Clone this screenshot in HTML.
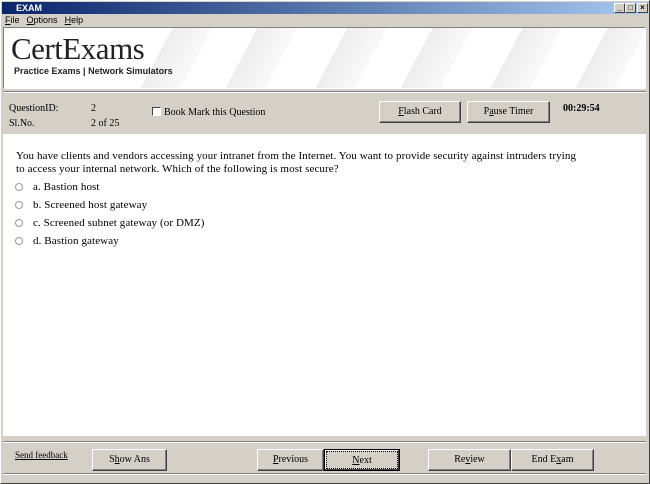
<!DOCTYPE html>
<html><head><meta charset="utf-8"><style>
*{margin:0;padding:0;box-sizing:border-box}
body{width:650px;height:484px;background:#d4d0c8;position:relative;overflow:hidden;font-family:"Liberation Serif",serif;font-size:10px;color:#000}
.abs{position:absolute}
.win{left:0;top:0;width:650px;height:484px;border:1px solid #fff;border-right-color:#404040;border-bottom-color:#404040}
.title{left:2px;top:2px;width:646px;height:12px;background:linear-gradient(90deg,#0a246a,#a6caf0);color:#fff;font:bold 9px "Liberation Sans",sans-serif;padding-left:14px;line-height:12px}
.tb{top:3px;width:11px;height:10px;background:#d4d0c8;border:1px solid #fff;border-right-color:#404040;border-bottom-color:#404040;font:bold 8px "Liberation Sans",sans-serif;text-align:center;line-height:8px;color:#000}
.menu{left:5px;top:15px;font:9px "Liberation Sans",sans-serif}
.menu span{margin-right:7px}
.banner{left:3px;top:27px;width:643px;height:62px;background:#fff;border:1px solid #808080;border-right-color:#fff;border-bottom-color:#fff;overflow:hidden}
.stripe{position:absolute;top:0;width:40px;height:70px;transform:skewX(-28deg);background:linear-gradient(90deg,rgba(215,215,215,.45),rgba(240,240,240,.35));}
.btn{position:absolute;background:#d4d0c8;border:1px solid #fff;border-right-color:#404040;border-bottom-color:#404040;box-shadow:inset -1px -1px #808080;text-align:center;font-size:10px}
.content{left:3px;top:134px;width:643px;height:302px;background:#fff;font-size:11px;letter-spacing:0.1px}
.opt{position:absolute;left:12px}
.opt i{display:inline-block;width:8px;height:8px;border-radius:50%;border:1px solid #999;margin-right:10px;vertical-align:-1px}
.hl{position:absolute;left:3px;width:643px;height:2px;border-top:1px solid #808080;border-bottom:1px solid #fff}
</style></head><body>
<div class="abs win"></div>
<div class="abs title">EXAM</div>
<div class="abs tb" style="left:614px">_</div>
<div class="abs tb" style="left:625px">□</div>
<div class="abs tb" style="left:637px">×</div>
<div class="abs menu"><span><u>F</u>ile</span><span><u>O</u>ptions</span><span><u>H</u>elp</span></div>
<div class="abs banner">
<div class="stripe" style="left:150px"></div><div class="stripe" style="left:235px"></div><div class="stripe" style="left:325px"></div><div class="stripe" style="left:410px"></div><div class="stripe" style="left:500px"></div><div class="stripe" style="left:585px"></div>
<div style="position:absolute;left:7px;top:3px;font:31px 'Liberation Serif',serif;color:#222;letter-spacing:-0.5px">CertExams</div>
<div style="position:absolute;left:10px;top:38px;font:bold 9px 'Liberation Sans',sans-serif;color:#222">Practice Exams | Network Simulators</div>
</div>
<div class="hl" style="top:91px"></div>
<div class="abs" style="left:9px;top:103px">QuestionID:</div>
<div class="abs" style="left:91px;top:103px">2</div>
<div class="abs" style="left:9px;top:118px">Sl.No.</div>
<div class="abs" style="left:91px;top:118px">2 of 25</div>
<div class="abs" style="left:152px;top:107px;width:9px;height:9px;background:#fff;border:1px solid #404040;border-right-color:#fff;border-bottom-color:#fff"></div>
<div class="abs" style="left:164px;top:107px">Book Mark this Question</div>
<div class="btn" style="left:379px;top:101px;width:82px;height:22px;line-height:20px"><u>F</u>lash Card</div>
<div class="btn" style="left:467px;top:101px;width:83px;height:22px;line-height:20px">P<u>a</u>use Timer</div>
<div class="abs" style="left:563px;top:103px;font-weight:bold">00:29:54</div>
<div class="abs content">
<div style="position:absolute;left:13px;top:16px;line-height:13px;width:630px">You have clients and vendors accessing your intranet from the Internet. You want to provide security against intruders trying<br>to access your internal network. Which of the following is most secure?</div>
<div class="opt" style="top:47px"><i></i>a. Bastion host</div>
<div class="opt" style="top:65px"><i></i>b. Screened host gateway</div>
<div class="opt" style="top:83px"><i></i>c. Screened subnet gateway (or DMZ)</div>
<div class="opt" style="top:101px"><i></i>d. Bastion gateway</div>
</div>
<div class="hl" style="top:441px"></div>
<div class="hl" style="top:473px"></div>
<div class="abs" style="left:15px;top:450px;font-size:9px;text-decoration:underline">Send feedback</div>
<div class="btn" style="left:92px;top:449px;width:75px;height:22px;line-height:20px">S<u>h</u>ow Ans</div>
<div class="btn" style="left:257px;top:449px;width:67px;height:22px;line-height:20px"><u>P</u>revious</div>
<div class="btn" style="left:324px;top:449px;width:76px;height:22px;line-height:18px;border:1px solid #000;box-shadow:inset -1px -1px #404040,inset 1px 1px #fff"><span style="border:1px dotted #000;display:block;margin:1px;height:18px"><u>N</u>ext</span></div>
<div class="btn" style="left:428px;top:449px;width:83px;height:22px;line-height:20px">Re<u>v</u>iew</div>
<div class="btn" style="left:511px;top:449px;width:83px;height:22px;line-height:20px">End E<u>x</u>am</div>
</body></html>
